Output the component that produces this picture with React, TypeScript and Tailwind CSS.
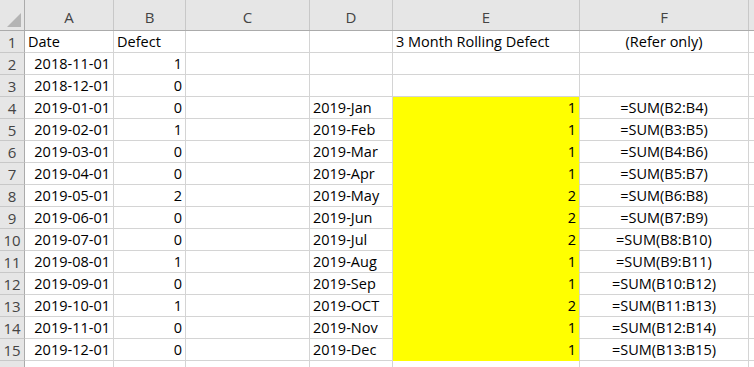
import React from "react";

type Row = {
  a?: string;
  b?: string;
  d?: string;
  e?: string;
  f?: string;
  header?: boolean;
};

const rows: Row[] = [
  { a: "Date", b: "Defect", e: "3 Month Rolling Defect", f: "(Refer only)", header: true },
  { a: "2018-11-01", b: "1" },
  { a: "2018-12-01", b: "0" },
  { a: "2019-01-01", b: "0", d: "2019-Jan", e: "1", f: "=SUM(B2:B4)" },
  { a: "2019-02-01", b: "1", d: "2019-Feb", e: "1", f: "=SUM(B3:B5)" },
  { a: "2019-03-01", b: "0", d: "2019-Mar", e: "1", f: "=SUM(B4:B6)" },
  { a: "2019-04-01", b: "0", d: "2019-Apr", e: "1", f: "=SUM(B5:B7)" },
  { a: "2019-05-01", b: "2", d: "2019-May", e: "2", f: "=SUM(B6:B8)" },
  { a: "2019-06-01", b: "0", d: "2019-Jun", e: "2", f: "=SUM(B7:B9)" },
  { a: "2019-07-01", b: "0", d: "2019-Jul", e: "2", f: "=SUM(B8:B10)" },
  { a: "2019-08-01", b: "1", d: "2019-Aug", e: "1", f: "=SUM(B9:B11)" },
  { a: "2019-09-01", b: "0", d: "2019-Sep", e: "1", f: "=SUM(B10:B12)" },
  { a: "2019-10-01", b: "1", d: "2019-OCT", e: "2", f: "=SUM(B11:B13)" },
  { a: "2019-11-01", b: "0", d: "2019-Nov", e: "1", f: "=SUM(B12:B14)" },
  { a: "2019-12-01", b: "0", d: "2019-Dec", e: "1", f: "=SUM(B13:B15)" },
];

const cols = [
  { id: "A", w: "w-[89px]" },
  { id: "B", w: "w-[72px]" },
  { id: "C", w: "w-[124px]" },
  { id: "D", w: "w-[83px]" },
  { id: "E", w: "w-[187px]" },
  { id: "F", w: "w-[169px]" },
];

const cell = "h-[22px] shrink-0 border-r border-b border-[#d4d4d4] flex items-center pt-[2px] px-[3px] overflow-hidden whitespace-nowrap";

export default function App() {
  return (
    <div className="w-[754px] h-[367px] overflow-hidden bg-white text-[14.5px] text-black font-['Open_Sans',sans-serif] leading-none">
      {/* column headers */}
      <div className="flex h-[31px] bg-[#e6e6e6] border-b border-[#ababab]">
        <div className="w-[25px] shrink-0 border-r border-[#ababab] relative">
          <div className="absolute right-[3px] bottom-[3px] w-0 h-0 border-l-[14px] border-l-transparent border-b-[14px] border-b-[#b4b4b4]" />
        </div>
        {cols.map((c) => (
          <div
            key={c.id}
            className={`${c.w} shrink-0 border-r border-[#c8c8c8] flex items-center justify-center pt-[5px] text-[#444] text-[15px]`}
          >
            {c.id}
          </div>
        ))}
        <div className="flex-1" />
      </div>

      {rows.map((r, i) => {
        const yellow = i >= 3;
        return (
          <div key={i} className="flex">
            <div className="w-[25px] h-[22px] shrink-0 bg-[#e6e6e6] border-r border-b border-[#ababab] border-b-[#c8c8c8] flex items-center justify-center pt-[2px] text-[#444] text-[15px]">
              {i + 1}
            </div>
            <div className={`${cell} w-[89px] ${r.header ? "justify-start" : "justify-end"}`}>{r.a}</div>
            <div className={`${cell} w-[72px] ${r.header ? "justify-start" : "justify-end"}`}>{r.b}</div>
            <div className={`${cell} w-[124px]`} />
            <div className={`${cell} w-[83px] justify-start`}>{r.d}</div>
            <div
              className={`${cell} w-[187px] ${r.header ? "justify-start" : "justify-end"} ${
                yellow ? "bg-[#ffff00] border-b-[#ffff00]" : ""
              }`}
            >
              {r.e}
            </div>
            <div className={`${cell} w-[169px] justify-center`}>{r.f}</div>
            <div className="flex-1 h-[22px] border-b border-[#d4d4d4]" />
          </div>
        );
      })}

      {/* partial row 16 */}
      <div className="flex h-[10px]">
        <div className="w-[25px] shrink-0 bg-[#e6e6e6] border-r border-[#ababab]" />
        {cols.map((c) => (
          <div key={c.id} className={`${c.w} shrink-0 border-r border-[#d4d4d4]`} />
        ))}
      </div>
    </div>
  );
}
